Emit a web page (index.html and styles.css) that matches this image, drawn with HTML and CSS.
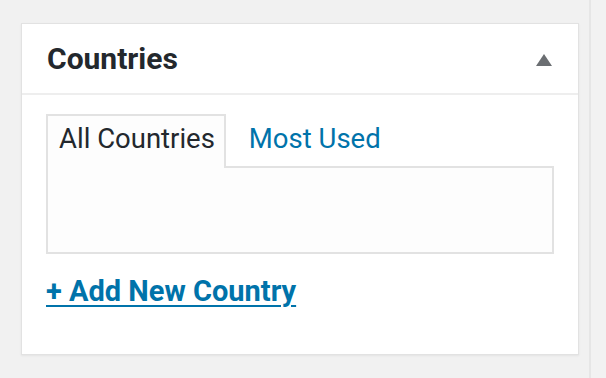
FILE: index.html
```html
<!DOCTYPE html>
<html>
<head>
<meta charset="utf-8">
<link rel="stylesheet" href="styles.css">
</head>
<body>
<div class="page">
  <div class="main">
    <div class="postbox">
      <div class="postbox-header">
        <h2 class="hndle">Countries</h2>
        <span class="toggle" aria-hidden="true"></span>
      </div>
      <div class="inside">
        <ul class="tabs">
          <li class="tab active">All Countries</li>
          <li class="tab"><a href="#">Most Used</a></li>
        </ul>
        <div class="panel"></div>
        <a class="add-new" href="#">+ Add New Country</a>
      </div>
    </div>
  </div>
  <div class="side-strip"></div>
</div>
</body>
</html>
```
FILE: styles.css
```css
html, body {
  margin: 0;
  padding: 0;
  background: #f1f1f1;
  height: 100%;
}
.page {
  display: flex;
  height: 378px;
  font-family: Roboto, "Liberation Sans", sans-serif;
}
.main {
  width: 589px;
  padding: 23px 0 0 21px;
  box-sizing: border-box;
}
.side-strip {
  flex: 1;
  border-left: 2px solid #e6e6e6;
  background: #f2f2f2;
}
.postbox {
  width: 558px;
  height: 332px;
  box-sizing: border-box;
  background: #fff;
  border: 1px solid #e2e2e2;
  box-shadow: 0 1px 2px rgba(0,0,0,0.06);
}
.postbox-header {
  display: flex;
  align-items: center;
  justify-content: space-between;
  height: 71px;
  box-sizing: border-box;
  border-bottom: 2px solid #eeeeee;
  padding: 0 26px 0 25px;
}
.hndle {
  margin: 0;
  font-size: 30px;
  font-weight: 700;
  color: #23282d;
}
.toggle {
  width: 0;
  height: 0;
  border-left: 8px solid transparent;
  border-right: 8px solid transparent;
  border-bottom: 12px solid #6b6e72;
  margin-top: 2px;
}
.inside {
  padding: 19px 24px 0 24px;
}
.tabs {
  display: flex;
  margin: 0;
  padding: 0;
  list-style: none;
  position: relative;
  z-index: 1;
}
.tab {
  font-size: 27.5px;
  line-height: 45px;
  height: 50px;
  padding: 0 9px 0 11px;
  border: 2px solid transparent;
  border-bottom: none;
}
.tab + .tab {
  margin-left: 10px;
}
.tab.active {
  color: #23282d;
  border-color: #e2e2e2;
  background: #fdfdfd;
  height: 52px;
}
.tab a {
  color: #0073aa;
  text-decoration: none;
}
.panel {
  height: 84px;
  margin-top: -2px;
  border: 2px solid #e2e2e2;
  background: #fdfdfd;
}
.add-new {
  display: inline-block;
  margin-top: 20px;
  font-size: 29px;
  font-weight: 700;
  color: #0073aa;
  text-decoration: underline;
  text-decoration-thickness: 2px;
  text-underline-offset: 4px;
}
```
